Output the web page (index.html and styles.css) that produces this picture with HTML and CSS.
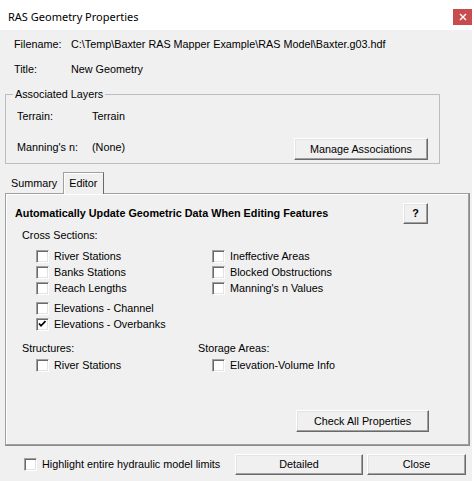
FILE: index.html
```html
<!DOCTYPE html>
<html lang="en">
<head>
<meta charset="utf-8">
<title>RAS Geometry Properties</title>
<link rel="stylesheet" href="styles.css">
</head>
<body>
<div class="dialog">
  <div class="titlebar">
    <span class="title">RAS Geometry Properties</span>
    <span class="close-btn">
      <svg width="8" height="8" viewBox="0 0 8 8"><path d="M1 1L7 7M7 1L1 7" stroke="#fff" stroke-width="1.4"/></svg>
    </span>
  </div>

  <div class="info">
    <div class="info-row"><span>Filename:</span><span>C:\Temp\Baxter RAS Mapper Example\RAS Model\Baxter.g03.hdf</span></div>
    <div class="info-row"><span>Title:</span><span>New Geometry</span></div>
  </div>

  <fieldset class="group">
    <legend>Associated Layers</legend>
    <div class="layers">
      <span class="lbl">Terrain:</span>
      <span class="lbl">Terrain</span>
      <span></span>
      <span class="lbl lbl-btn">Manning's n:</span>
      <span class="lbl lbl-btn">(None)</span>
      <button class="btn btn-manage">Manage Associations</button>
    </div>
  </fieldset>

  <div class="tabs">
    <div class="tab">Summary</div>
    <div class="tab active">Editor</div>
  </div>

  <div class="tab-panel">
    <div class="panel-head">
      <span class="heading">Automatically Update Geometric Data When Editing Features</span>
      <button class="btn btn-help">?</button>
    </div>

    <div class="section-label">Cross Sections:</div>
    <div class="cb-grid">
      <label class="cb"><span class="box"></span>River Stations</label>
      <label class="cb"><span class="box"></span>Ineffective Areas</label>
      <label class="cb"><span class="box"></span>Banks Stations</label>
      <label class="cb"><span class="box"></span>Blocked Obstructions</label>
      <label class="cb"><span class="box"></span>Reach Lengths</label>
      <label class="cb"><span class="box"></span>Manning's n Values</label>
    </div>
    <div class="cb-list">
      <label class="cb"><span class="box"></span>Elevations - Channel</label>
      <label class="cb"><span class="box checked"><svg width="11" height="11" viewBox="0 0 11 11"><path d="M2 4.5L4 6.8L8.5 2.2" fill="none" stroke="#000" stroke-width="1.7"/></svg></span>Elevations - Overbanks</label>
    </div>

    <div class="sub-sections">
      <div class="sub">
        <div class="sub-label">Structures:</div>
        <label class="cb"><span class="box"></span>River Stations</label>
      </div>
      <div class="sub">
        <div class="sub-label">Storage Areas:</div>
        <label class="cb"><span class="box"></span>Elevation-Volume Info</label>
      </div>
    </div>

    <div class="panel-foot">
      <button class="btn btn-check">Check All Properties</button>
    </div>
  </div>

  <div class="footer">
    <label class="cb cb-footer"><span class="box"></span>Highlight entire hydraulic model limits</label>
    <div class="footer-btns">
      <button class="btn btn-detailed">Detailed</button>
      <button class="btn btn-close">Close</button>
    </div>
  </div>
</div>
</body>
</html>
```

FILE: styles.css
```css
* {
  box-sizing: border-box;
}

html,
body {
  margin: 0;
  padding: 0;
  background: #fff;
}

body {
  font-family: "Liberation Sans", Arial, sans-serif;
  font-size: 10.8px;
  line-height: 13px;
  color: #000;
}

.dialog {
  width: 472px;
  height: 481px;
  background: #f0f0f0;
}

/* window caption */
.titlebar {
  height: 30px;
  background: #fff;
  display: flex;
  align-items: center;
  padding-left: 8px;
}

.title {
  font-family: "Noto Sans", "Open Sans", sans-serif;
  font-size: 11px;
  margin-top: 2px;
}

.close-btn {
  margin-left: auto;
  width: 19px;
  height: 16px;
  margin-top: 3px;
  background: #c84b4e;
  display: flex;
  align-items: center;
  justify-content: center;
}

.close-btn svg {
  display: block;
}

/* file info */
.info {
  padding: 8px 0 0 14px;
  display: flex;
  flex-direction: column;
  gap: 12px;
}

.info-row {
  display: grid;
  grid-template-columns: 57px 1fr;
}

/* group box */
.group {
  margin: 12px 0 0 5px;
  width: 435px;
  padding: 9px 0 3px 11px;
  border: 1px solid #bdbdbd;
  min-width: 0;
}

.group legend {
  margin-left: -4px;
  padding: 0 2px;
}

.layers {
  display: grid;
  grid-template-columns: 75px 1fr auto;
  grid-template-rows: 13px 22px;
  row-gap: 15px;
  align-items: start;
}

.lbl-btn {
  padding-top: 3px;
}

/* classic 3d push button */
.btn {
  font: inherit;
  color: #000;
  background: #f0f0f0;
  border: 1px solid;
  border-color: #fff #696969 #696969 #fff;
  box-shadow: inset -1px -1px 0 #a0a0a0, inset 1px 1px 0 #e3e3e3;
  padding: 0;
  height: 22px;
  cursor: default;
}

.btn-manage {
  width: 134px;
  margin-right: 11px;
}

/* tabs */
.tabs {
  margin: 8px 0 0 5px;
  height: 21px;
  display: flex;
  align-items: flex-end;
  position: relative;
  z-index: 1;
}

.tab {
  height: 19px;
  padding: 3px 6px 0;
}

.tab.active {
  height: 22px;
  margin-bottom: -1px;
  padding: 4px 6px 0 5px;
  background: #f0f0f0;
  border: 1px solid #a0a0a0;
  border-bottom: none;
  border-right-color: #696969;
  box-shadow: inset 1px 1px 0 #fff;
}

.tab-panel {
  margin-left: 5px;
  width: 465px;
  height: 253px;
  padding: 9px 0 0 9px;
  border: 1px solid #a0a0a0;
  border-right-color: #8a8a8a;
  border-bottom-color: #8a8a8a;
  box-shadow: inset -2px -2px 0 -1px #a0a0a0, inset 1px 1px 0 #fff;
}

.panel-head {
  width: 413px;
  display: flex;
  align-items: center;
  justify-content: space-between;
}

.heading {
  font-weight: bold;
}

.btn-help {
  width: 25px;
  height: 21px;
  font-weight: bold;
}

.section-label {
  margin: 5px 0 0 7px;
}

/* checkboxes */
.cb-grid {
  margin: 6px 0 0 7px;
  display: grid;
  grid-template-columns: 176px 1fr;
  grid-auto-rows: 16px;
}

.cb-list {
  margin: 4px 0 0 7px;
  display: grid;
  grid-auto-rows: 16px;
}

.cb {
  display: flex;
  align-items: center;
  gap: 5px;
  padding-left: 14px;
  height: 16px;
}

.box {
  width: 13px;
  height: 13px;
  flex: none;
  background: #fff;
  border: 1px solid;
  border-color: #a0a0a0 #fff #fff #a0a0a0;
  box-shadow: inset 1px 1px 0 #696969, inset -1px -1px 0 #e3e3e3;
  display: flex;
  align-items: center;
  justify-content: center;
}

.box svg {
  display: block;
}

.sub-sections {
  margin: 10px 0 0 7px;
  display: grid;
  grid-template-columns: 176px 1fr;
}

.sub .cb {
  margin-top: 2px;
}

.sub-label {
  margin-bottom: 2px;
}

.panel-foot {
  width: 414px;
  margin-top: 37px;
  display: flex;
  justify-content: flex-end;
}

.btn-check {
  width: 133px;
  height: 22px;
}

/* bottom bar */
.footer {
  margin-top: 8px;
  display: flex;
  align-items: center;
  padding: 0 6px 0 10px;
  height: 21px;
}

.cb-footer {
  padding-left: 14px;
}

.footer-btns {
  margin-left: auto;
  display: flex;
  gap: 4px;
}

.btn-detailed {
  width: 128px;
  height: 21px;
}

.btn-close {
  width: 99px;
  height: 21px;
}
```
